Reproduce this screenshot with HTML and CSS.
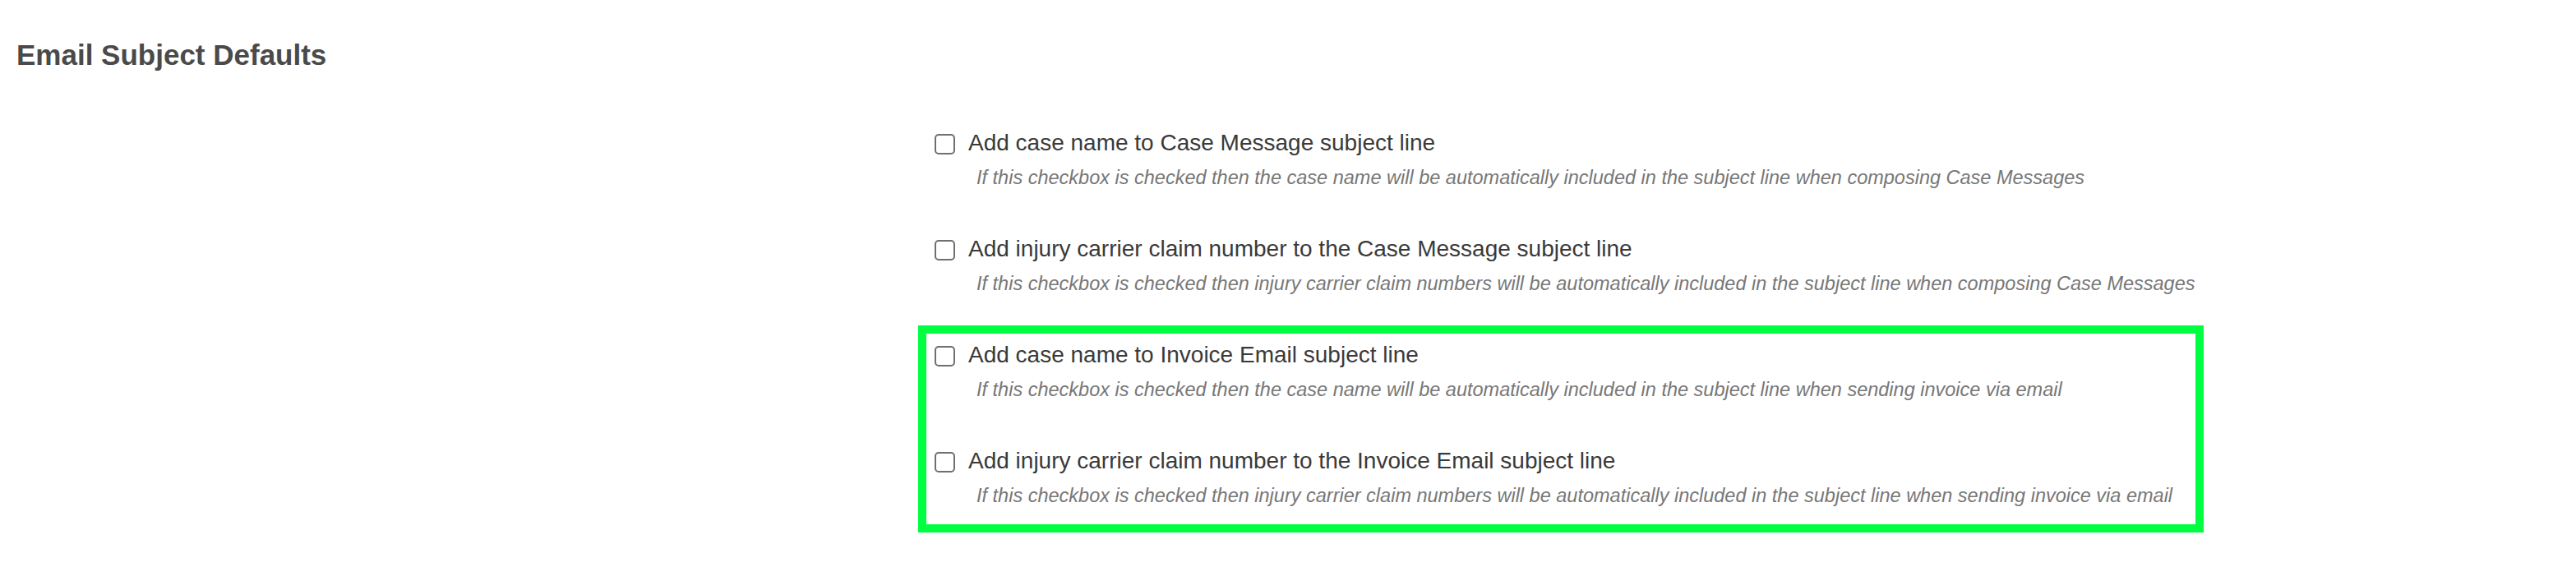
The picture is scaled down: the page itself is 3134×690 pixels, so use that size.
FILE: index.html
```html
<!DOCTYPE html>
<html lang="en">

<head>
    <meta charset="UTF-8">
    <meta name="viewport" content="width=device-width, initial-scale=1.0">
    <title>Email Subject Defaults</title>
    <link rel="stylesheet" href="styles.css">
</head>

<body>
    <h2 class="section-title">Email Subject Defaults</h2>

    <div class="settings">
        <div class="setting-row">
            <input id="case-name-message" type="checkbox">
            <div class="setting-text">
                <label for="case-name-message">Add case name to Case Message subject line</label>
                <p class="help-text">If this checkbox is checked then the case name will be automatically included in the subject line when composing Case Messages</p>
            </div>
        </div>

        <div class="setting-row">
            <input id="claim-number-message" type="checkbox">
            <div class="setting-text">
                <label for="claim-number-message">Add injury carrier claim number to the Case Message subject line</label>
                <p class="help-text">If this checkbox is checked then injury carrier claim numbers will be automatically included in the subject line when composing Case Messages</p>
            </div>
        </div>

        <div class="highlight">
            <div class="setting-row">
                <input id="case-name-invoice" type="checkbox">
                <div class="setting-text">
                    <label for="case-name-invoice">Add case name to Invoice Email subject line</label>
                    <p class="help-text">If this checkbox is checked then the case name will be automatically included in the subject line when sending invoice via email</p>
                </div>
            </div>

            <div class="setting-row">
                <input id="claim-number-invoice" type="checkbox">
                <div class="setting-text">
                    <label for="claim-number-invoice">Add injury carrier claim number to the Invoice Email subject line</label>
                    <p class="help-text">If this checkbox is checked then injury carrier claim numbers will be automatically included in the subject line when sending invoice via email</p>
                </div>
            </div>
        </div>
    </div>
</body>

</html>
```

FILE: styles.css
```css
body {
    margin: 0;
    padding: 0 20px;
    background-color: #fff;
    font-family: "Liberation Sans", Arial, Helvetica, sans-serif;
    color: #333;
}

.section-title {
    margin: 46px 0 0;
    font-size: 35px;
    line-height: 42px;
    font-weight: bold;
    color: #4a4a4a;
}

.settings {
    margin-top: 68px;
    padding-left: 1117px;
    display: flex;
    flex-direction: column;
    align-items: flex-start;
    gap: 54px;
}

.setting-row {
    display: flex;
    gap: 16px;
}

.setting-row input[type="checkbox"] {
    appearance: none;
    flex: none;
    width: 25px;
    height: 25px;
    margin: 7px 0 0;
    border: 2px solid #6f6f6f;
    border-radius: 5px;
    background-color: #fff;
}

.setting-text label {
    display: block;
    font-size: 28px;
    line-height: 36px;
    color: #3a3a3a;
}

.help-text {
    margin: 9px 0 0 10px;
    font-size: 23.5px;
    line-height: 30px;
    font-style: italic;
    color: #777;
}

.highlight {
    display: flex;
    flex-direction: column;
    gap: 54px;
    margin: -18px 0 0 -20px;
    padding: 8px 28px 20px 10px;
    border: 10px solid #00ff40;
}
```
